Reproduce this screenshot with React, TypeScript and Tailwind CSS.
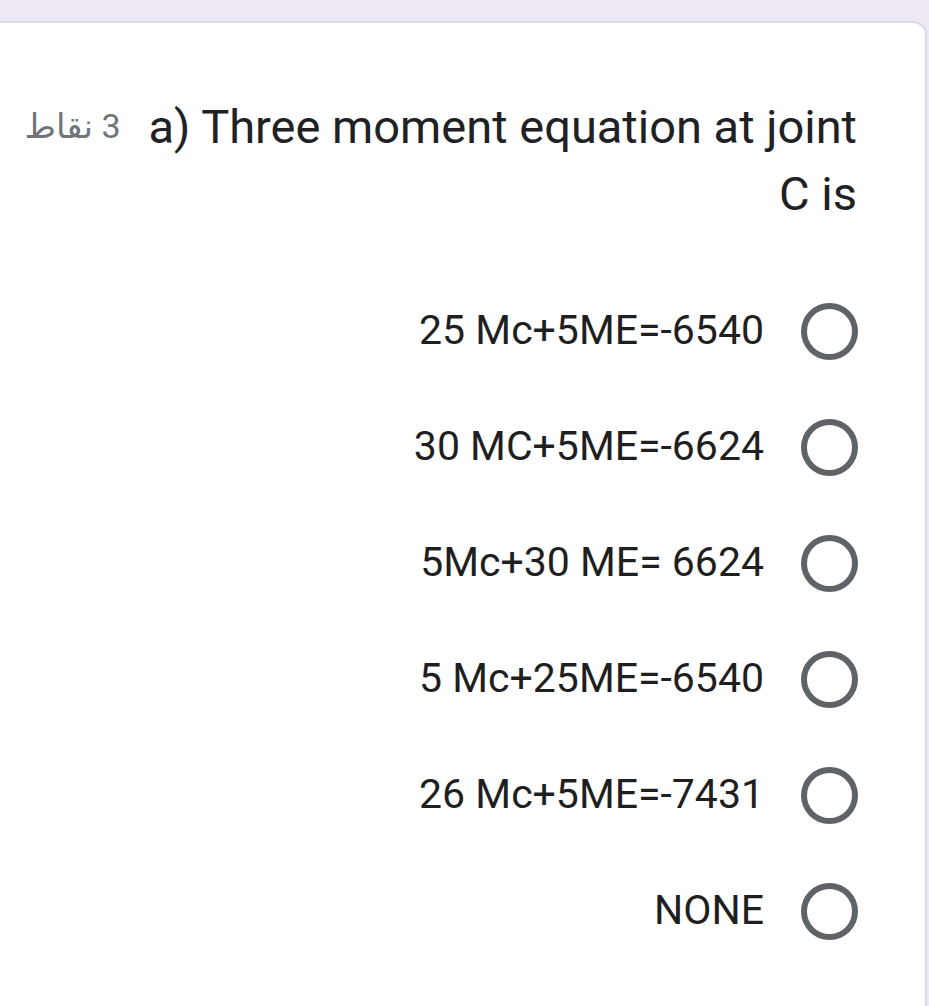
import React from "react";

const options = [
  "25 Mc+5ME=-6540",
  "30 MC+5ME=-6624",
  "5Mc+30 ME= 6624",
  "5 Mc+25ME=-6540",
  "26 Mc+5ME=-7431",
  "NONE",
];

export default function App() {
  return (
    <div className="w-[929px] h-[1006px] bg-[#efe9f5] overflow-hidden" style={{ fontFamily: "Roboto, 'Noto Sans', sans-serif" }}>
      <div className="h-[21px]" />
      <div className="ml-[-20px] w-[947px] h-[985px] bg-white border-t-2 border-r-2 border-[#dcdae2] rounded-tr-[14px]" dir="rtl">
        <div className="flex items-start pr-[68px] pt-[70px]">
          <div className="flex-1 text-[47px] leading-[67px] text-[#202124] text-right whitespace-nowrap" dir="ltr">
            <div>a) Three moment equation at joint</div>
            <div>C is</div>
          </div>
          <div className="text-[34px] leading-[67px] text-[#70757a] ml-[50px] mr-[28px] whitespace-nowrap" style={{ fontFamily: "Roboto, 'DejaVu Sans', sans-serif" }}>
            3 نقاط
          </div>
        </div>
        <div className="mt-[46px] flex flex-col pr-[67px]">
          {options.map((o) => (
            <div key={o} className="h-[116px] flex items-center gap-[37px]">
              <div className="w-[57px] h-[57px] rounded-full border-[6px] border-[#5f6368] shrink-0" />
              <div className="text-[41px] text-[#1f1f1f]" dir="ltr">{o}</div>
            </div>
          ))}
        </div>
      </div>
    </div>
  );
}
